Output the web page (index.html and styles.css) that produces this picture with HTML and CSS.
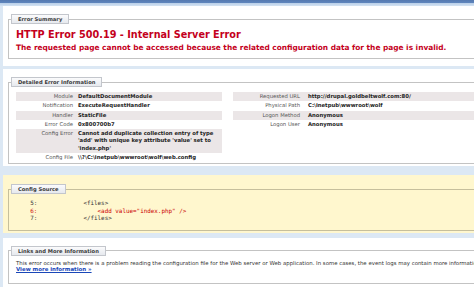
FILE: index.html
```html
<!DOCTYPE html>
<html lang="en">
<head>
  <meta charset="UTF-8">
  <meta name="viewport" content="width=device-width, initial-scale=1.0">
  <title>IIS Detailed Error - 500.19 - Internal Server Error</title>
  <link rel="stylesheet" href="styles.css">
</head>
<body>
  <div class="header"></div>
  <div class="content">

    <!-- Summary -->
    <div class="panel summary">
      <fieldset>
        <legend>Error Summary</legend>
        <h2>HTTP Error 500.19 - Internal Server Error</h2>
        <h3>The requested page cannot be accessed because the related configuration data for the page is invalid.</h3>
      </fieldset>
    </div>

    <!-- Detailed info -->
    <div class="panel details">
      <fieldset>
        <legend>Detailed Error Information</legend>
        <div class="detail-tables">
          <table class="info left">
            <tr class="alt"><th>Module</th><td>DefaultDocumentModule</td></tr>
            <tr><th>Notification</th><td>ExecuteRequestHandler</td></tr>
            <tr class="alt"><th>Handler</th><td>StaticFile</td></tr>
            <tr><th>Error Code</th><td>0x800700b7</td></tr>
            <tr class="alt"><th>Config Error</th><td>Cannot add duplicate collection entry of type 'add' with unique key attribute 'value' set to 'index.php'</td></tr>
            <tr><th>Config File</th><td>\\?\C:\inetpub\wwwroot\wolf\web.config</td></tr>
          </table>
          <table class="info right">
            <tr class="alt"><th>Requested URL</th><td>http://drupal.goldbeltwolf.com:80/</td></tr>
            <tr><th>Physical Path</th><td>C:\inetpub\wwwroot\wolf</td></tr>
            <tr class="alt"><th>Logon Method</th><td>Anonymous</td></tr>
            <tr><th>Logon User</th><td>Anonymous</td></tr>
          </table>
        </div>
      </fieldset>
    </div>

    <!-- Config source -->
    <div class="panel source">
      <fieldset>
        <legend>Config Source</legend>
<pre class="code">    5:             &lt;files&gt;
<span class="err">    6:                 &lt;add value="index.php" /&gt;</span>
    7:             &lt;/files&gt;</pre>
      </fieldset>
    </div>

    <!-- Links -->
    <div class="panel links">
      <fieldset>
        <legend>Links and More Information</legend>
        <p>This error occurs when there is a problem reading the configuration file for the Web server or Web application. In some cases, the event logs may contain more information about what caused this error.</p>
        <a href="#" class="more">View more information &raquo;</a>
      </fieldset>
    </div>

  </div>
</body>
</html>
```

FILE: styles.css
```css
* {
  box-sizing: border-box;
}

html, body {
  margin: 0;
  padding: 0;
  overflow: hidden;
}

body {
  background-color: #dce8f4;
  font-family: "DejaVu Sans", Verdana, sans-serif;
  color: #222;
  width: 474px;
  height: 287px;
}

.header {
  height: 6px;
  background: linear-gradient(#5579b0 0, #5f86bd 3px, #b9cfe8 3px, #d3e2f2 6px);
}

.content {
  width: 700px;
}

.panel {
  margin-left: 3px;
  background-color: #fff;
  padding: 8px 0 6px 5px;
}

fieldset {
  margin: 0;
  padding: 0 0 0 1px;
  border: 1px solid #c3c3c3;
  min-width: 0;
  font-size: 5.5px;
}

legend {
  margin-left: 1px;
  padding: 0 6px;
  height: 10px;
  line-height: 8px;
  font-size: 5.2px;
  font-weight: bold;
  color: #3a3a3a;
  background: linear-gradient(#fbfbfc, #e6e9ee);
  border: 1px solid #c3c6cc;
}

/* summary */
.summary {
  padding-bottom: 7px;
}

.summary h2 {
  margin: 5px 0 0 6px;
  font-size: 9.7px;
  line-height: 11px;
  color: #c4001c;
  white-space: nowrap;
}

.summary h3 {
  margin: 3px 0 0 6px;
  padding-bottom: 6px;
  font-size: 7.4px;
  line-height: 9px;
  color: #c4001c;
  white-space: nowrap;
}

/* details */
.details {
  margin-top: 3px;
  padding-bottom: 2px;
}

.detail-tables {
  display: flex;
  align-items: flex-start;
  gap: 11px;
  padding: 5px 0 1px 6px;
}

.info {
  border-collapse: collapse;
  font-size: 5.3px;
  line-height: 7.3px;
}

.info th,
.info td {
  padding: 1px 0;
  vertical-align: top;
}

.info th {
  font-weight: normal;
  color: #555;
  text-align: right;
  white-space: nowrap;
}

.info td {
  font-weight: bold;
  color: #222;
  padding-left: 5px;
  padding-right: 2px;
}

.info tr.alt {
  background-color: #ebe6e7;
}

.info.left {
  width: 206px;
}

.info.left th {
  width: 57px;
}

.info.right {
  width: 260px;
}

.info.right th {
  width: 67px;
}

.info.right td {
  padding-left: 8px;
}

/* config source */
.source {
  margin-top: 9px;
  background-color: #fff7ce;
  padding: 9px 0 2px 5px;
}

.source fieldset {
  border-color: #c6bf9c;
}

.code {
  margin: 6px 0 7px 6px;
  font-family: "DejaVu Sans Mono", "Liberation Mono", monospace;
  font-size: 5.9px;
  line-height: 7.5px;
  color: #333;
}

.code .err {
  color: #cc0000;
}

/* links */
.links {
  margin-top: 5px;
  padding-bottom: 10px;
}

.links p {
  margin: 4px 0 0 6px;
  font-size: 5.4px;
  line-height: 6.5px;
  color: #333;
  white-space: nowrap;
}

.links .more {
  display: block;
  margin: 0 0 10px 6px;
  font-size: 5.45px;
  line-height: 6.5px;
  font-weight: bold;
  color: #1a47b8;
}
```
